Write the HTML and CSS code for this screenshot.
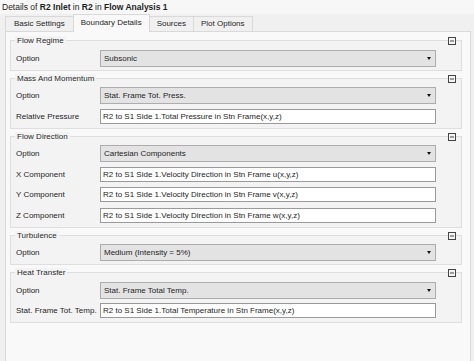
FILE: index.html
```html
<!DOCTYPE html>
<html lang="en">
<head>
  <meta charset="UTF-8">
  <title>Details of R2 Inlet</title>
  <link rel="stylesheet" href="styles.css">
</head>

<body>
  <div class="title">Details of <b>R2 Inlet</b> in <b>R2</b> in <b>Flow Analysis 1</b></div>

  <div class="tabs">
    <div class="tab">Basic Settings</div>
    <div class="tab active">Boundary Details</div>
    <div class="tab">Sources</div>
    <div class="tab">Plot Options</div>
  </div>

  <div class="panel">
    <!-- Flow Regime -->
    <div class="group">
      <div class="group-head">
        <span class="legend">Flow Regime</span>
        <svg class="collapse" width="8" height="8" viewBox="0 0 8 8"><rect x="0.5" y="0.5" width="7" height="7" fill="#f4f4f4" stroke="#444"/><line x1="2" y1="4" x2="6" y2="4" stroke="#444"/></svg>
      </div>
      <div class="rows">
        <div class="label">Option</div>
        <div class="combo">Subsonic<span class="arrow"></span></div>
      </div>
    </div>

    <!-- Mass And Momentum -->
    <div class="group">
      <div class="group-head">
        <span class="legend">Mass And Momentum</span>
        <svg class="collapse" width="8" height="8" viewBox="0 0 8 8"><rect x="0.5" y="0.5" width="7" height="7" fill="#f4f4f4" stroke="#444"/><line x1="2" y1="4" x2="6" y2="4" stroke="#444"/></svg>
      </div>
      <div class="rows">
        <div class="label">Option</div>
        <div class="combo">Stat. Frame Tot. Press.<span class="arrow"></span></div>
        <div class="label">Relative Pressure</div>
        <div class="field"><div class="input">R2 to S1 Side 1.Total Pressure in Stn Frame(x,y,z)</div></div>
      </div>
    </div>

    <!-- Flow Direction -->
    <div class="group">
      <div class="group-head">
        <span class="legend">Flow Direction</span>
        <svg class="collapse" width="8" height="8" viewBox="0 0 8 8"><rect x="0.5" y="0.5" width="7" height="7" fill="#f4f4f4" stroke="#444"/><line x1="2" y1="4" x2="6" y2="4" stroke="#444"/></svg>
      </div>
      <div class="rows">
        <div class="label">Option</div>
        <div class="combo">Cartesian Components<span class="arrow"></span></div>
        <div class="label">X Component</div>
        <div class="field"><div class="input">R2 to S1 Side 1.Velocity Direction in Stn Frame u(x,y,z)</div></div>
        <div class="label">Y Component</div>
        <div class="field"><div class="input">R2 to S1 Side 1.Velocity Direction in Stn Frame v(x,y,z)</div></div>
        <div class="label">Z Component</div>
        <div class="field"><div class="input">R2 to S1 Side 1.Velocity Direction in Stn Frame w(x,y,z)</div></div>
      </div>
    </div>

    <!-- Turbulence -->
    <div class="group">
      <div class="group-head">
        <span class="legend">Turbulence</span>
        <svg class="collapse" width="8" height="8" viewBox="0 0 8 8"><rect x="0.5" y="0.5" width="7" height="7" fill="#f4f4f4" stroke="#444"/><line x1="2" y1="4" x2="6" y2="4" stroke="#444"/></svg>
      </div>
      <div class="rows">
        <div class="label">Option</div>
        <div class="combo">Medium (Intensity = 5%)<span class="arrow"></span></div>
      </div>
    </div>

    <!-- Heat Transfer -->
    <div class="group">
      <div class="group-head">
        <span class="legend">Heat Transfer</span>
        <svg class="collapse" width="8" height="8" viewBox="0 0 8 8"><rect x="0.5" y="0.5" width="7" height="7" fill="#f4f4f4" stroke="#444"/><line x1="2" y1="4" x2="6" y2="4" stroke="#444"/></svg>
      </div>
      <div class="rows">
        <div class="label">Option</div>
        <div class="combo">Stat. Frame Total Temp.<span class="arrow"></span></div>
        <div class="label">Stat. Frame Tot. Temp.</div>
        <div class="field"><div class="input">R2 to S1 Side 1.Total Temperature in Stn Frame(x,y,z)</div></div>
      </div>
    </div>
  </div>
</body>

</html>
```

FILE: styles.css
```css
body {
  margin: 0;
  height: 361px;
  display: flex;
  flex-direction: column;
  overflow: hidden;
  background-color: #f0f0f0;
  font-family: 'Liberation Sans', Arial, sans-serif;
  font-size: 8px;
  color: #1e1e1e;
}

.title {
  height: 14px;
  line-height: 14px;
  padding-left: 2px;
  background-color: #f7f7f7;
  font-size: 8.5px;
}

.tabs {
  display: flex;
  align-items: flex-end;
  height: 17px;
  margin-left: 5px;
}

.tab {
  height: 14px;
  line-height: 14px;
  padding: 0 7px;
  border: 1px solid #d9d9d9;
  border-bottom: none;
  background-color: #f0f0f0;
  margin-right: -1px;
}

.tab:first-child {
  padding: 0 8px;
}

.tab.active {
  height: 17px;
  line-height: 15px;
  padding: 0 7px;
  background-color: #f9f9f9;
  position: relative;
  z-index: 1;
  margin-bottom: -1px;
}

.panel {
  flex: 1;
  margin: 0 3px 0 5px;
  border: 1px solid #d9d9d9;
  border-bottom: none;
  background-color: #f9f9f9;
  padding: 8px 8px 0 4px;
}

.group {
  border: 1px solid #dedede;
  background-color: #f3f3f3;
  margin-bottom: 7px;
  padding: 0 5px 3px 4px;
}

.group-head {
  display: flex;
  justify-content: space-between;
  align-items: center;
  height: 10px;
  margin-top: -5px;
  margin-bottom: 3.5px;
}

.legend {
  background-color: #f3f3f3;
  padding: 0 2px;
  color: #2a2a2a;
  line-height: 10px;
}

.collapse {
  display: block;
  background-color: #f3f3f3;
}

.rows {
  display: grid;
  grid-template-columns: 85px 1fr;
  grid-auto-rows: 17px;
  row-gap: 3.5px;
  padding-right: 20px;
  align-items: center;
}

.label {
  padding-left: 1px;
  white-space: nowrap;
}

.combo {
  height: 15px;
  line-height: 15px;
  border: 1px solid #adadad;
  background-color: #e3e3e3;
  padding-left: 3px;
  display: flex;
  justify-content: space-between;
  align-items: center;
}

.arrow {
  width: 0;
  height: 0;
  border-left: 2.5px solid transparent;
  border-right: 2.5px solid transparent;
  border-top: 3px solid #111;
  margin-right: 4px;
}

.field {
  display: flex;
  align-items: center;
}

.input {
  flex: 1;
  height: 13px;
  line-height: 13px;
  border: 1px solid #9a9a9a;
  background-color: #fff;
  padding-left: 2px;
  white-space: nowrap;
  overflow: hidden;
}
```
